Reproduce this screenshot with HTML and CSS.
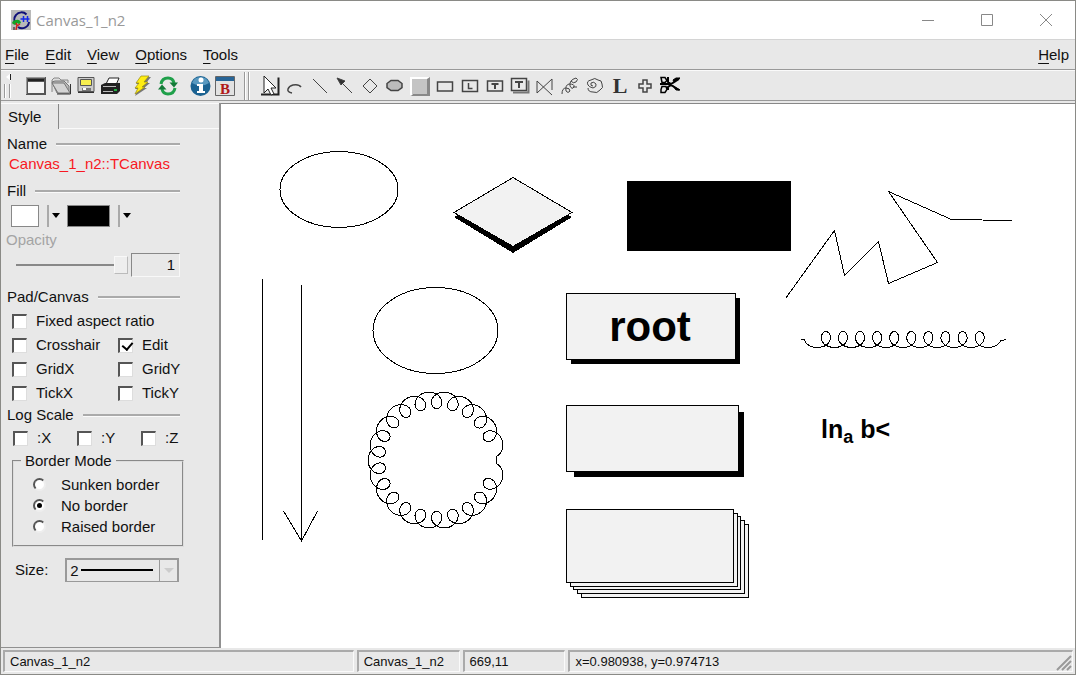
FILE: index.html
```
<!DOCTYPE html>
<html lang="en">
<head>
<meta charset="utf-8">
<title>Canvas_1_n2</title>
<link rel="stylesheet" href="styles.css">
</head>
<body>
<div class="window">
  <header class="titlebar">
    <svg class="logo" viewBox="0 0 20 20" aria-hidden="true">
      <rect width="20" height="20" fill="#b9b9b9"/>
      <path d="M15.500 4.500A7 7 0 0 0 5 5a7 7 0 0 0 0 9" fill="none" stroke="#101078" stroke-width="2"/>
      <path d="M7 17a7 7 0 0 0 11-5" fill="none" stroke="#101078" stroke-width="2"/>
      <path d="M12.500 6v6M9.500 9h9M16.500 6v6" stroke="#1528e8" stroke-width="1.500"/>
      <path d="M1 13q1-3 4-3 4-1 5 3l-2 1-2-1-2 2-2-1z" fill="#12a424"/>
      <path d="M5 13l1 2-1 5M6 16l3-2" fill="none" stroke="#d02018" stroke-width="1.500"/>
      <path d="M3 20v-3" stroke="#111"/>
    </svg>
    <h1 class="caption">Canvas_1_n2</h1>
    <div class="winbtns">
      <button class="winbtn" aria-label="Minimize"><svg viewBox="0 0 14 14"><path d="M1 7.500h12"/></svg></button>
      <button class="winbtn" aria-label="Maximize"><svg viewBox="0 0 14 14"><path d="M1.500 1.500h11v11h-11z"/></svg></button>
      <button class="winbtn" aria-label="Close"><svg viewBox="0 0 14 14"><path d="M1 1l12 12M13 1l-12 12"/></svg></button>
    </div>
  </header>

  <nav class="menubar">
    <button><u>F</u>ile</button>
    <button><u>E</u>dit</button>
    <button><u>V</u>iew</button>
    <button><u>O</u>ptions</button>
    <button><u>T</u>ools</button>
    <button class="help"><u>H</u>elp</button>
  </nav>

  <div class="toolbar">
    <svg class="grip" viewBox="0 0 16 28" aria-hidden="true"><path d="M10 1v8l-5-4z" fill="#fff"/><path d="M9.500 2v6" stroke="#222"/><path d="M3.500 12v14M8.500 12v14" stroke="#999"/><path d="M4.500 12v14M9.500 12v14" stroke="#fff"/></svg>
    <div class="tools">
      <button aria-label="New"><svg viewBox="0 0 24 24"><path d="M2 3h20v18h-20z" fill="#555"/><path d="M2 3h19v1h-18v16h-1z" fill="#999"/><path d="M4 5h16v2h-16z" fill="#222"/><path d="M4 8h16v11h-16z" fill="#f4f4f4"/></svg></button>
      <button aria-label="Open"><svg viewBox="0 0 24 24"><path d="M3 18V6l2-2h5l2 2h7v3" fill="#ddd" stroke="#888"/><path d="M3 8l3-1h9l5 5v7h-12z" fill="#bbb" stroke="#777"/><path d="M3 9h12l6 10h-12z" fill="#d4d4d4" stroke="#777"/><path d="M8 20h13.500v-10" fill="none" stroke="#333"/></svg></button>
      <button aria-label="Save"><svg viewBox="0 0 24 24"><path d="M4 3.500h16v14h-16z" fill="#ccc" stroke="#555"/><path d="M6.500 5.500h11v6h-11z" fill="#f7ef50" stroke="#555"/><path d="M8 14h9v3h-9z" fill="#777"/><path d="M9 14h3v2h-3z" fill="#fff"/><path d="M4 18.500h16" stroke="#333"/></svg></button>
      <button aria-label="Print"><svg viewBox="0 0 24 24"><path d="M7 10l3-6h10l-3 7z" fill="#fff" stroke="#222"/><path d="M2 11l4-2h15v8l-3 3h-16z" fill="#222"/><path d="M4 12h13v1h-13zM4 17h10v1h-10z" fill="#bbb"/><path d="M15 15h3v2h-3z" fill="#20b040"/></svg></button>
    </div>
    <div class="tools">
      <button aria-label="Interrupt"><svg viewBox="0 0 24 24"><path d="M10 3h10l-5 6h4l-6 5h3l-12 8 3-7h-3l4-5h-3z" fill="#777"/><path d="M10 2h8l-5 6h4l-6 5h3l-10 7 3-6h-3l4-5h-3z" fill="#ffed12" stroke="#998c10" stroke-width=".7"/></svg></button>
      <button aria-label="Refresh"><svg viewBox="0 0 24 24"><path d="M5 10q1-6 7-6 5 0 6 5M19 14q-1 6-7 6-5 0-6-5" fill="none" stroke="#1fa04a" stroke-width="3"/><path d="M13.500 8.500h8.500l-4 5zM2 15.500h8.500l-4.500-5z" fill="#137a38"/></svg></button>
    </div>
    <div class="tools">
      <button aria-label="Inspect"><svg viewBox="0 0 24 24"><circle cx="12.500" cy="12" r="10" fill="#1b6291"/><path d="M4 9a9 9 0 0 1 17 0q-8 5-17 0z" fill="#5898bf"/><circle cx="13" cy="6" r="2.500" fill="#fff"/><path d="M9 10h6v7h2v2h-8v-2h2v-5h-2z" fill="#fff"/></svg></button>
      <button aria-label="Browser"><svg viewBox="0 0 24 24"><path d="M2.500 2.500h19v19h-19z" fill="#e2e2e2" stroke="#666"/><path d="M3 3h18v4h-18z" fill="#286597"/><text x="12" y="20" class="glyph-b">B</text></svg></button>
    </div>
    <svg class="divider" viewBox="0 0 10 28" aria-hidden="true"><path d="M2.500 0v28M6.500 0v28" stroke="#999"/><path d="M3.500 0v28M7.500 0v28" stroke="#fff"/></svg>
    <div class="tools draw">
      <button aria-label="Pointer"><svg viewBox="0 0 24 24"><path d="M3 20.500h17.500v-17" fill="none" stroke="#222" stroke-width="2"/><path d="M6 2v17l4-4 3 6 3-1-3-6h5z" fill="#fff" stroke="#222"/></svg></button>
      <button aria-label="Arc"><svg viewBox="0 0 24 24"><path d="M9 19q-5-1-4-4 1-3 5-4 6-1 8 2" stroke-width="1.500"/></svg></button>
      <button aria-label="Line"><svg viewBox="0 0 24 24"><path d="M5 5l14 14"/></svg></button>
      <button aria-label="Arrow"><svg viewBox="0 0 24 24"><path d="M5 5l14 14"/><path d="M4 4l8 3-4 4z" fill="#333"/></svg></button>
      <button aria-label="Diamond"><svg viewBox="0 0 24 24"><path d="M12 5l7 7-7 7-7-7z"/></svg></button>
      <button aria-label="Ellipse"><svg viewBox="0 0 24 24"><path d="M8 6.500h7l4 3v4l-4 3h-7l-4-3v-4z" fill="#bbb" stroke-width="1.500"/></svg></button>
      <button aria-label="Pad"><svg viewBox="0 0 24 24"><path d="M2 3h19v18h-19z" fill="#fff" stroke="none"/><path d="M22 3v19h-19l2-2h14v-15z" fill="#888" stroke="none"/><path d="M4 5h15v15h-15z" fill="#c4c4c4" stroke="none"/></svg></button>
      <button aria-label="Pave"><svg viewBox="0 0 24 24"><path d="M4.500 8h15v9h-15z" stroke-width="1.500"/></svg></button>
      <button aria-label="Pave label"><svg viewBox="0 0 24 24"><path d="M4.500 6.500h15v11h-15z" stroke-width="1.500"/><path d="M10.500 9v5.500h4" stroke-width="1.500"/></svg></button>
      <button aria-label="Pave text"><svg viewBox="0 0 24 24"><path d="M4.500 7h15v10h-15z" stroke-width="1.500"/><path d="M8.500 10h7M12 10v5" stroke-width="2"/></svg></button>
      <button aria-label="Paves text"><svg viewBox="0 0 24 24"><path d="M3.500 4.500h15v12h-15z" stroke-width="1.500"/><path d="M5 18.500h15.500v-12" stroke-width="2" stroke="#777"/><path d="M7 8h8M11 8v6" stroke-width="2"/></svg></button>
      <button aria-label="Polyline"><svg viewBox="0 0 24 24"><path d="M19 21L4 7v12l15-14v11"/></svg></button>
      <button aria-label="Curly line"><svg viewBox="0 0 24 24"><path d="M4 20q0-6 4-6 4 0 4 3-2 3-4 0-1-6 3-7 6 0 5 3-2 3-4-1-1-6 6-8 3 1 0 4-3 2-5-1M15 13h4"/></svg></button>
      <button aria-label="Curly arc"><svg viewBox="0 0 24 24"><path d="M5 11q-2-4 3-5 4-3 7 0 4 0 4 4 2 4-2 6-3 4-7 2-5 0-5-4M5 11q1 2 5 3 4-1 3-4-2-3-5-1-1 3 2 3"/></svg></button>
      <button aria-label="Text"><svg viewBox="0 0 24 24"><text x="12" y="19" class="glyph-l">L</text></svg></button>
      <button aria-label="Marker"><svg viewBox="0 0 24 24"><path d="M10 6h4v4h4v4h-4v4h-4v-4h-4v-4h4z" stroke-width="1.500"/></svg></button>
      <button aria-label="Cut"><svg viewBox="0 0 24 24"><path d="M3 3.500h4l2 3-2 2h-3zM4 12.500h4l1 3-2 3h-4v-3z" stroke="#000" stroke-width="1.500"/><path d="M2 10h12M10 3v5l3 2 8-5M10 16v-3l3-2 8 5" stroke="#000" stroke-width="2"/><path d="M15 6l3-2h4l-6 4zM15 12l7 4h-4z" fill="#000" stroke="#000"/></svg></button>
    </div>
  </div>

  <main class="work">
    <aside class="side">
      <div class="tabs"><button class="tab">Style</button></div>
      <form class="panel">
        <h2 class="head">Name</h2>
        <p class="objname">Canvas_1_n2::TCanvas</p>

        <h2 class="head">Fill</h2>
        <div class="fill">
          <button type="button" class="swatch white" aria-label="Fill color"></button>
          <button type="button" class="drop" aria-label="Choose fill color"></button>
          <button type="button" class="swatch black" aria-label="Fill pattern"></button>
          <button type="button" class="drop" aria-label="Choose fill pattern"></button>
        </div>
        <label class="opacity" for="opacity">Opacity</label>
        <div class="slide">
          <input type="range" id="opacity" min="0" max="1" step="0.01" value="1">
          <input type="text" class="num" value="1" aria-label="Opacity value">
        </div>

        <h2 class="head">Pad/Canvas</h2>
        <div class="checks">
          <label class="wide"><input type="checkbox">Fixed aspect ratio</label>
          <label><input type="checkbox">Crosshair</label>
          <label><input type="checkbox" checked>Edit</label>
          <label><input type="checkbox">GridX</label>
          <label><input type="checkbox">GridY</label>
          <label><input type="checkbox">TickX</label>
          <label><input type="checkbox">TickY</label>
        </div>

        <h2 class="head">Log Scale</h2>
        <div class="logs">
          <label><input type="checkbox">:X</label>
          <label><input type="checkbox">:Y</label>
          <label><input type="checkbox">:Z</label>
        </div>

        <fieldset class="border">
          <legend>Border Mode</legend>
          <label><input type="radio" name="border">Sunken border</label>
          <label><input type="radio" name="border" checked>No border</label>
          <label><input type="radio" name="border">Raised border</label>
        </fieldset>

        <div class="size">
          <label for="size">Size:</label>
          <div class="combo">
            <select id="size"><option>2</option></select>
            <span class="stroke"></span>
            <span class="arrow"></span>
          </div>
        </div>
      </form>
    </aside>

    <section class="canvas">
      <svg class="drawing" role="img" aria-label="Canvas drawing">
        <g transform="translate(-221 -104)">
          <ellipse cx="339" cy="189.500" rx="59" ry="38"/>
          <path class="solid" d="M454 217l59-34 59 34-59 36z"/>
          <path class="pave" d="M454 212.500l59-35 59 35-59 34z"/>
          <path class="solid" d="M627 181h164v70h-164z"/>
          <path d="M785.500 298.500L834.500 230.500L844.500 275.500L878.500 241.500L888.500 283.500L937.500 262.500L888.500 191.500L951.500 219.500L1012.500 220.500"/>
          <path d="M262.500 279v261M301.500 285v256M283.500 511l18 30 16-30"/>
          <ellipse cx="435.500" cy="330.500" rx="62.500" ry="43"/>
          <path id="curly-arc"/>
          <path id="curly-line"/>
          <path class="solid" d="M571 298h169v66h-169z"/>
          <path class="pave" d="M566.500 293.500h169v66h-169z"/>
          <text x="650" y="341" class="big">root</text>
          <path class="solid" d="M574 412h170v65h-170z"/>
          <path class="pave" d="M566.500 405.500h172v66h-172z"/>
          <path class="pave" d="M581.500 524.500h167v73h-167z"/>
          <path class="pave" d="M577.500 520.500h167v73h-167z"/>
          <path class="pave" d="M573.500 516.500h167v73h-167z"/>
          <path class="pave" d="M570.500 513.500h167v73h-167z"/>
          <path class="pave" d="M566.500 509.500h167v73h-167z"/>
          <text x="821" y="438" class="formula">ln<tspan class="sub" dy="5">a</tspan><tspan dy="-5"> b&lt;</tspan></text>
        </g>
      </svg>
    </section>
  </main>

  <footer class="status">
    <span>Canvas_1_n2</span>
    <span>Canvas_1_n2</span>
    <span>669,11</span>
    <span class="coords">x=0.980938, y=0.974713
      <svg class="resize" viewBox="0 0 16 16" aria-hidden="true"><path d="M1 15l14-14M6 15l9-9M11 15l4-4" stroke="#999" stroke-width="2"/></svg>
    </span>
  </footer>
</div>
<script src="curly.js"></script>
</body>
</html>
```

FILE: styles.css
```
* { box-sizing: border-box; }
body {
  margin: 0;
  height: 100vh;
  font: 15px/20px "Liberation Sans", Arial, sans-serif;
  color: #111;
}
button, input, select { font: inherit; color: inherit; margin: 0; }
button { border: 0; padding: 0; background: none; }

.window {
  display: flex;
  flex-direction: column;
  height: 100%;
  border: 1px solid #8a8a86;
  background: #e8e8e8;
}

.titlebar {
  display: flex;
  align-items: center;
  height: 39px;
  flex: none;
  padding-left: 10px;
  background: #fff;
  border-bottom: 1px solid #d4d4d4;
}
.logo { width: 20px; height: 20px; }
.caption {
  margin: 0 0 0 5px;
  font: 15px/20px "Open Sans", sans-serif;
  color: #999;
}
.winbtns { display: flex; margin-left: auto; }
.winbtn { display: grid; place-items: center; width: 59px; height: 38px; }
.winbtn svg { width: 14px; height: 14px; fill: none; stroke: #888; }

.menubar {
  display: flex;
  gap: 16px;
  flex: none;
  height: 30px;
  padding: 0 6px 0 4px;
  border-bottom: 1px solid #999;
}
.menubar u { text-underline-offset: 3px; }
.menubar .help { margin-left: auto; }

.toolbar {
  display: flex;
  align-items: center;
  flex: none;
  height: 31px;
  border-top: 1px solid #fafafa;
  border-bottom: 1px solid #999;
}
.grip { width: 16px; height: 28px; margin-right: 7px; }
.tools { display: flex; margin-right: 7px; }
.tools button { width: 25px; height: 24px; }
.tools svg { display: block; width: 24px; height: 24px; }
.draw svg { fill: none; stroke: #444; }
.divider { width: 10px; height: 28px; margin: 0 6px 0 -3px; }
.glyph-b { font: bold 15px "Liberation Serif", serif; fill: #b01818; text-anchor: middle; }
.glyph-l { font: bold 22px "Liberation Serif", serif; fill: #333; stroke: none; text-anchor: middle; }

.work { display: flex; flex: 1; min-height: 0; padding-top: 2px; }
.side {
  display: flex;
  flex-direction: column;
  flex: none;
  width: 220px;
  border-right: 2px solid #909090;
  border-bottom: 1px solid #909090;
}
.tabs { display: flex; flex: none; height: 26px; border-top: 1px solid #fafafa; }
.tabs::after { content: ""; flex: 1; border-bottom: 1px solid #fafafa; }
.tab { padding: 0 17px 0 7px; border-right: 1px solid #888; text-align: left; }
.panel { padding: 5px 39px 0 6px; }
.head {
  display: flex;
  align-items: center;
  gap: 9px;
  margin: 0;
  font: inherit;
}
.head::after { content: ""; flex: 1; height: 2px; background: #aaa; border-bottom: 1px solid #fafafa; }
.objname { margin: 0 0 7px 2px; color: #f81822; }

.fill { display: flex; align-items: center; height: 29px; padding-left: 4px; }
.swatch { height: 22px; border: 1px solid #888; }
.white { width: 28px; background: #fff; margin-right: 8px; }
.black { width: 43px; background: #000; margin-right: 8px; }
.drop {
  display: flex;
  align-items: center;
  width: 20px;
  height: 22px;
  padding-left: 3px;
  border-left: 2px solid #aaa;
}
.drop::before { content: ""; border: 4px solid transparent; border-top: 5px solid #000; border-bottom: 0; }
.opacity { display: block; margin-left: -1px; color: #a4a4a4; }

.slide { display: flex; align-items: center; height: 25px; margin: 2px 0 10px 9px; }
.slide input[type="range"] {
  appearance: none;
  flex: 1;
  min-width: 0;
  height: 20px;
  background: linear-gradient(#888, #888) center / 100% 2px no-repeat;
}
.slide input[type="range"]::-webkit-slider-thumb {
  appearance: none;
  width: 14px;
  height: 18px;
  background: #eee;
  border: 1px solid #f8f8f8;
  border-right-color: #bbb;
  border-bottom-color: #bbb;
}
.num {
  width: 49px;
  height: 24px;
  margin-left: 3px;
  padding: 0 4px;
  text-align: right;
  background: #e8e8e8;
  border: 1px solid #888;
  border-right-color: #f8f8f8;
  border-bottom-color: #f8f8f8;
}

input[type="checkbox"] {
  appearance: none;
  width: 15px;
  height: 15px;
  flex: none;
  background: #fff;
  border: 2px solid #555;
  border-right: 1px solid #ddd;
  border-bottom: 1px solid #ddd;
}
input[type="checkbox"]:checked::before {
  content: "";
  display: block;
  width: 5px;
  height: 8px;
  margin: 0 4px;
  border: solid #000;
  border-width: 0 2px 2px 0;
  transform: rotate(40deg);
}
.checks {
  display: grid;
  grid-template-columns: 106px 1fr;
  grid-auto-rows: 24px;
  margin: 2px 0 0 5px;
}
.checks label, .logs label, .border label { display: flex; align-items: center; gap: 9px; white-space: nowrap; }
.checks .wide { grid-column: 1 / -1; }
.logs { display: grid; grid-template-columns: repeat(3, 64px); height: 26px; margin-left: 6px; }

.border {
  margin: 0 -4px 11px 5px;
  padding: 3px 19px 8px;
  border: 2px groove #ddd;
}
.border legend { margin-left: -12px; padding: 0 4px; }
.border label { height: 21px; gap: 15px; }
input[type="radio"] {
  appearance: none;
  display: grid;
  place-items: center;
  width: 13px;
  height: 13px;
  border-radius: 50%;
  background: #fff;
  border: 2px solid;
  border-color: #555 #eee #eee #555;
}
input[type="radio"]:checked::before { content: ""; width: 5px; height: 5px; border-radius: 50%; background: #000; }

.size { display: flex; align-items: center; margin-right: 1px; padding-left: 8px; gap: 17px; }
.combo { display: grid; grid-template-columns: 1fr 20px; flex: 1; height: 24px; align-items: center; }
.combo select {
  grid-area: 1 / 1 / 2 / 3;
  appearance: none;
  width: 100%;
  height: 24px;
  padding: 0 3px;
  background: #e8e8e8;
  border: 2px solid #999;
  border-bottom-width: 1px;
  border-radius: 0;
}
.stroke { grid-area: 1 / 1; height: 2px; margin: 0 6px 0 16px; background: #000; pointer-events: none; }
.arrow {
  grid-area: 1 / 2;
  height: 24px;
  display: grid;
  place-items: center;
  border: 1px solid #999;
  pointer-events: none;
}
.arrow::before { content: ""; border: 5px solid transparent; border-top-color: #ccc; border-bottom: 0; }

.canvas { flex: 1; min-width: 0; background: #fff; border-top: 1px solid #888; }
.drawing { display: block; width: 100%; height: 100%; fill: none; stroke: #000; }
.drawing path, .drawing ellipse { shape-rendering: crispEdges; }
.drawing .pave { fill: #f2f2f2; }
.drawing .solid { fill: #000; stroke: none; }
.drawing text { fill: #000; stroke: none; font-weight: bold; }
.drawing .big { font-size: 42px; text-anchor: middle; }
.drawing .formula { font-size: 25px; }
.drawing .sub { font-size: 18px; }

.status {
  display: grid;
  grid-template-columns: 351fr 103fr 103fr 505fr;
  gap: 3px;
  flex: none;
  height: 26px;
  padding: 2px;
  font-size: 13px;
}
.status span {
  padding-left: 5px;
  line-height: 19px;
  border: 1px solid #aaa;
  border-width: 2px 1px 1px 2px;
  border-color: #aaa #fafafa #fafafa #aaa;
}
.status .coords { display: flex; justify-content: space-between; align-items: flex-end; }
.resize { width: 16px; height: 16px; }
```

FILE: curly.js
```
// Gluon-style curls: a trochoid laid along a line or a circle.
// The second harmonic draws the loops out into narrow drops.
const STEP = 0.2;

function curl(loops, advance, swing, pinch, amp, place) {
  const end = loops * 2 * Math.PI + Math.PI / 2;
  const pts = [];
  for (let t = -Math.PI / 2; t <= end + 0.01; t += STEP) {
    const s = advance * t + swing * Math.sin(t) + pinch * Math.sin(2 * t);
    pts.push(place(s, amp * Math.cos(t)));
  }
  return pts.map(p => p[0].toFixed(1) + " " + p[1].toFixed(1)).join("L");
}

const line = curl(10, 2.72, 8.6, 0.4, 8, (s, h) => [817.3 + s, 339.5 + h]);
document.getElementById("curly-line").setAttribute("d", "M800.5 339.5L" + line + "L1006 339.5");

const R = 60, start = 16.2 * Math.PI / 180;
const arc = curl(20, 2.73, 9.2, -0.3, 8.5, (s, h) => {
  const a = start + s / R;
  return [436.5 + (R + h) * Math.cos(a), 460 - (R + h) * Math.sin(a)];
});
document.getElementById("curly-arc").setAttribute("d", "M" + arc + "Z");
```
